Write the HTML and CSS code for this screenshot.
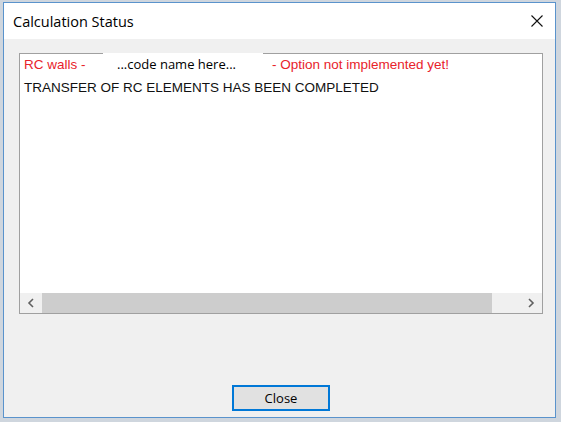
FILE: index.html
```html
<!DOCTYPE html>
<html>
<head>
<meta charset="utf-8">
<title>Calculation Status</title>
<link rel="stylesheet" href="styles.css">
</head>
<body>
<div class="window">
  <div class="titlebar">
    <span class="title">Calculation Status</span>
    <span class="close-x">
      <svg width="12" height="12" viewBox="0 0 12 12"><path d="M0.5 0.5 L11.5 11.5 M11.5 0.5 L0.5 11.5" stroke="#111" stroke-width="1.1" fill="none"/></svg>
    </span>
  </div>
  <div class="client">
    <div class="listbox">
      <div class="lines">
        <div class="line line-first">
          <span class="red tag">RC walls -</span>
          <span class="code">...code name here...</span>
          <span class="red note">- Option not implemented yet!</span>
        </div>
        <div class="line">TRANSFER OF RC ELEMENTS HAS BEEN COMPLETED</div>
      </div>
      <div class="hscroll">
        <div class="arrow">
          <svg width="8" height="10" viewBox="0 0 8 10"><path d="M6 1 L2 5 L6 9" stroke="#606060" stroke-width="1.6" fill="none"/></svg>
        </div>
        <div class="track"><div class="thumb"></div></div>
        <div class="arrow">
          <svg width="8" height="10" viewBox="0 0 8 10"><path d="M2 1 L6 5 L2 9" stroke="#606060" stroke-width="1.6" fill="none"/></svg>
        </div>
      </div>
    </div>
    <div class="buttons">
      <button class="btn">Close</button>
    </div>
  </div>
</div>
</body>
</html>
```
FILE: styles.css
```css
html, body {
  margin: 0;
  padding: 0;
}
body {
  background: #cfd6de;
  width: 561px;
  height: 422px;
  overflow: hidden;
  padding-top: 2px;
  padding-left: 3px;
  box-sizing: border-box;
}
.window {
  width: 553px;
  height: 416px;
  box-sizing: border-box;
  border: 1px solid #5a93cc;
  display: flex;
  flex-direction: column;
  background: #f0f0f0;
}
.titlebar {
  height: 36px;
  flex: 0 0 36px;
  background: #ffffff;
  display: flex;
  align-items: center;
  justify-content: space-between;
  padding-left: 9px;
  padding-right: 12px;
}
.title {
  font-family: "Open Sans", "Noto Sans", sans-serif;
  font-size: 14.5px;
  color: #000;
}
.close-x {
  display: flex;
  align-items: center;
}
.client {
  flex: 1;
  background: #f0f0f0;
  padding: 14px 12px 6px 15px;
  display: flex;
  flex-direction: column;
}
.listbox {
  height: 261px;
  box-sizing: border-box;
  border: 1px solid #a0a0a0;
  background: #ffffff;
  display: flex;
  flex-direction: column;
}
.lines {
  flex: 1;
  margin-top: -1px;
  padding-left: 4px;
  font-family: "Liberation Sans", Arial, sans-serif;
  font-size: 13.5px;
  color: #111;
}
.line {
  height: 23px;
  line-height: 23px;
  white-space: nowrap;
}
.line-first {
  display: flex;
  align-items: flex-start;
}
.red {
  color: #e8222b;
}
.tag {
  width: 79px;
}
.code {
  width: 146px;
  height: 20px;
  padding-left: 14px;
  background: #ffffff;
  font-family: "Open Sans", "Noto Sans", sans-serif;
  font-size: 13px;
  line-height: 22px;
  color: #000;
}
.note {
  margin-left: 9px;
}
.hscroll {
  height: 20px;
  display: flex;
  background: #f0f0f0;
}
.arrow {
  width: 22px;
  display: flex;
  align-items: center;
  justify-content: center;
}
.track {
  flex: 1;
  display: flex;
}
.thumb {
  width: 450px;
  background: #cdcdcd;
}
.buttons {
  margin-top: 71px;
  display: flex;
  justify-content: center;
}
.btn {
  width: 98px;
  height: 26px;
  box-sizing: border-box;
  border: 1px solid #0078d7;
  box-shadow: inset 0 0 0 1px #0078d7;
  background: #e1e1e1;
  font-family: "Open Sans", "Noto Sans", sans-serif;
  font-size: 13px;
  color: #000;
  padding: 0;
  margin: 0;
}
```
